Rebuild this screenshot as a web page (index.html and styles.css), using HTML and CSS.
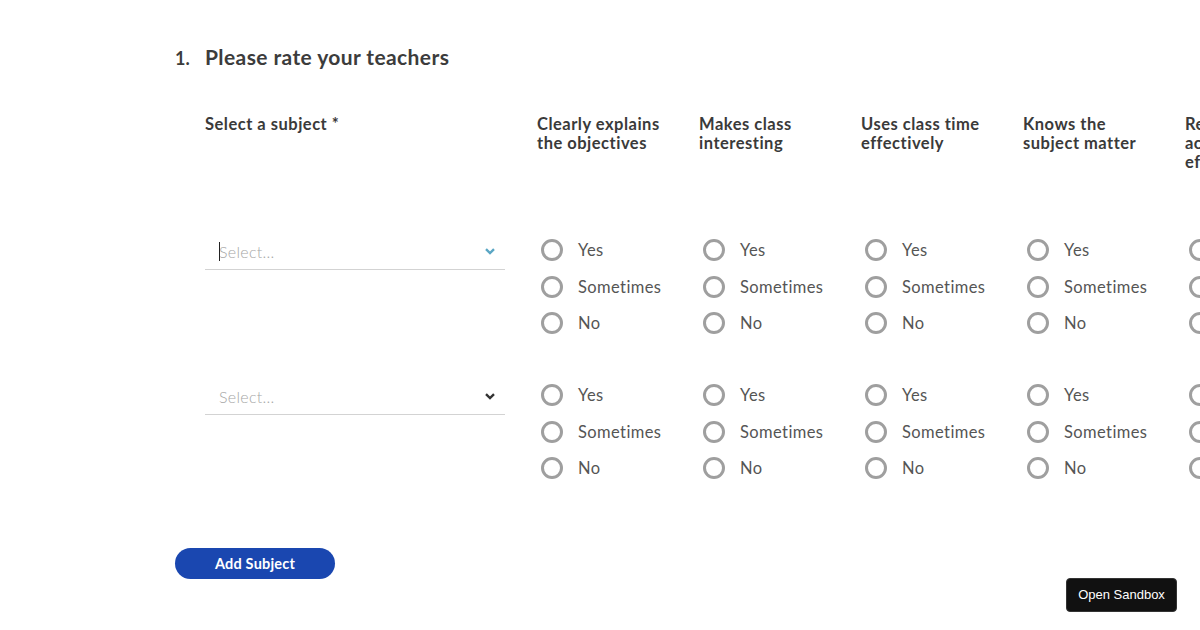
FILE: index.html
```html
<!DOCTYPE html>
<html>
<head>
<meta charset="utf-8">
<link rel="stylesheet" href="styles.css">
</head>
<body>
<div class="page">
  <div class="question">
    <div class="q-title"><span class="q-num">1.</span><span class="q-text">Please rate your teachers</span></div>
    <div class="matrix">
      <div class="head subject-head">Select a subject *</div>
      <div class="head">Clearly explains the objectives</div>
      <div class="head">Makes class interesting</div>
      <div class="head">Uses class time effectively</div>
      <div class="head">Knows the subject matter</div>
      <div class="head">Recognizes and acknowledges efforts</div>

      <div class="cell subject-cell">
        <div class="select focused"><span class="caret"></span><span class="placeholder">Select...</span>
          <svg class="chev" width="10" height="7" viewBox="0 0 10 7"><path d="M1 1.2 L5 5 L9 1.2" fill="none" stroke="currentColor" stroke-width="2.4"/></svg>
        </div>
      </div>
      <div class="cell"><div class="opt"><span class="radio"></span>Yes</div><div class="opt"><span class="radio"></span>Sometimes</div><div class="opt"><span class="radio"></span>No</div></div>
      <div class="cell"><div class="opt"><span class="radio"></span>Yes</div><div class="opt"><span class="radio"></span>Sometimes</div><div class="opt"><span class="radio"></span>No</div></div>
      <div class="cell"><div class="opt"><span class="radio"></span>Yes</div><div class="opt"><span class="radio"></span>Sometimes</div><div class="opt"><span class="radio"></span>No</div></div>
      <div class="cell"><div class="opt"><span class="radio"></span>Yes</div><div class="opt"><span class="radio"></span>Sometimes</div><div class="opt"><span class="radio"></span>No</div></div>
      <div class="cell"><div class="opt"><span class="radio"></span>Yes</div><div class="opt"><span class="radio"></span>Sometimes</div><div class="opt"><span class="radio"></span>No</div></div>

      <div class="cell subject-cell">
        <div class="select"><span class="placeholder">Select...</span>
          <svg class="chev" width="10" height="7" viewBox="0 0 10 7"><path d="M1 1.2 L5 5 L9 1.2" fill="none" stroke="currentColor" stroke-width="2.4"/></svg>
        </div>
      </div>
      <div class="cell"><div class="opt"><span class="radio"></span>Yes</div><div class="opt"><span class="radio"></span>Sometimes</div><div class="opt"><span class="radio"></span>No</div></div>
      <div class="cell"><div class="opt"><span class="radio"></span>Yes</div><div class="opt"><span class="radio"></span>Sometimes</div><div class="opt"><span class="radio"></span>No</div></div>
      <div class="cell"><div class="opt"><span class="radio"></span>Yes</div><div class="opt"><span class="radio"></span>Sometimes</div><div class="opt"><span class="radio"></span>No</div></div>
      <div class="cell"><div class="opt"><span class="radio"></span>Yes</div><div class="opt"><span class="radio"></span>Sometimes</div><div class="opt"><span class="radio"></span>No</div></div>
      <div class="cell"><div class="opt"><span class="radio"></span>Yes</div><div class="opt"><span class="radio"></span>Sometimes</div><div class="opt"><span class="radio"></span>No</div></div>
    </div>
    <button class="add-btn">Add Subject</button>
  </div>
</div>
<button class="sandbox-btn">Open Sandbox</button>
</body>
</html>
```
FILE: styles.css
```css
html, body {
  margin: 0;
  padding: 0;
  background: #fff;
  width: 1200px;
  height: 630px;
  overflow: hidden;
}
body {
  font-family: "Lato", "Open Sans", sans-serif;
  color: #3a3a3a;
  position: relative;
}
.page {
  padding: 44px 0 0 175px;
}
.q-title {
  display: flex;
  align-items: baseline;
  font-weight: 700;
  font-size: 21px;
  line-height: 26px;
  color: #3c3c3c;
}
.q-text {
  letter-spacing: 0.4px;
}
.q-num {
  width: 30px;
  font-size: 18px;
}
.matrix {
  margin-left: 30px;
  margin-top: 44px;
  display: grid;
  grid-template-columns: 332px repeat(5, 162px);
  width: max-content;
}
.head {
  font-weight: 700;
  font-size: 16.5px;
  line-height: 19px;
  letter-spacing: 0.5px;
  color: #3a3a3a;
  padding-right: 30px;
  height: 117px;
}
.subject-head {
  padding-right: 0;
}
.cell {
  display: flex;
  flex-direction: column;
  height: 145px;
}
.select {
  width: 300px;
  height: 34px;
  box-sizing: border-box;
  border-bottom: 1px solid #d3d3d3;
  display: flex;
  align-items: center;
  padding: 0 10px 0 14px;
  position: relative;
  margin-top: 4px;
}
.caret {
  position: absolute;
  left: 14px;
  top: 6px;
  width: 1px;
  height: 19px;
  background: #222;
}
.placeholder {
  font-size: 16px;
  font-weight: 300;
  letter-spacing: 0.3px;
  color: #a6a6a6;
  flex: 1;
  margin-top: -2px;
}
.chev {
  color: #333;
  margin-top: -2px;
}
.focused .chev {
  color: #5aa6c4;
}
.opt {
  display: flex;
  align-items: center;
  height: 36.6px;
  font-size: 16.5px;
  font-weight: 400;
  letter-spacing: 0.4px;
  color: #555;
}
.radio {
  width: 16px;
  height: 16px;
  border: 3px solid #9f9f9f;
  border-radius: 50%;
  margin-left: 4px;
  margin-right: 15px;
  flex: none;
}
.add-btn {
  margin-top: 26px;
  width: 160px;
  height: 31px;
  border: none;
  border-radius: 16px;
  background: #1a47b0;
  color: #fff;
  font-family: "Lato", sans-serif;
  font-weight: 700;
  font-size: 14.5px;
  letter-spacing: 0.2px;
  display: block;
}
.sandbox-btn {
  position: absolute;
  left: 1066px;
  top: 578px;
  width: 111px;
  height: 34px;
  background: #111;
  color: #fff;
  border: 1px solid #333;
  border-radius: 4px;
  font-family: "Liberation Sans", Arial, sans-serif;
  font-size: 13px;
  padding: 0 0 2px;
}
```
